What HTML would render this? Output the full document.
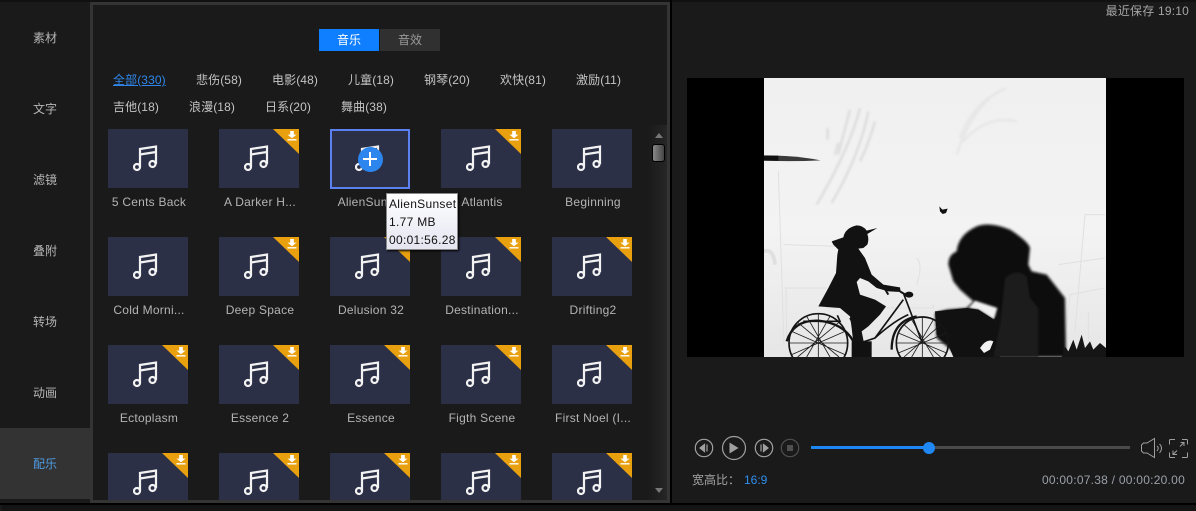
<!DOCTYPE html>
<html><head><meta charset="utf-8"><style>
*{margin:0;padding:0;box-sizing:border-box}
html,body{width:1196px;height:511px;overflow:hidden;background:#000;font-family:"Liberation Sans","Noto Sans CJK SC",sans-serif}
.a{position:absolute;white-space:nowrap}
#root{position:relative;width:1196px;height:511px;background:#1a1a1a;overflow:hidden}
.side{left:0;width:90px;text-align:center;font-size:12px;color:#b5b5b5;height:20px;line-height:20px}
.cat{font-size:12px;color:#c4c4c4;height:16px;line-height:16px;letter-spacing:.1px}
.th{width:80px;height:59px;background:#2b3047;overflow:hidden}
.th svg.n{position:absolute;left:25px;top:15px}
.cn{position:absolute;right:0;top:0;width:0;height:0;border-top:25px solid #e8a00e;border-left:26px solid transparent}
.dl{position:absolute;right:2px;top:2px;width:10px;height:10px}
.lb{width:112px;text-align:center;font-size:12px;color:#b4b4b4;letter-spacing:.25px;height:16px;line-height:16px}
</style></head><body><div id="root">
<!-- frame -->
<div class="a" style="left:0;top:0;width:1196px;height:2px;background:#111"></div>
<div class="a" style="left:90px;top:2px;width:580px;height:501px;background:#343434"></div>
<div class="a" style="left:93px;top:5px;width:574px;height:495px;background:#1a1a1a"></div>
<div class="a" style="left:670px;top:0;width:2px;height:503px;background:#000"></div>
<div class="a" style="left:0;top:503px;width:1196px;height:2px;background:#000"></div>
<div class="a" style="left:2px;top:505px;width:1194px;height:6px;background:#141414"></div>
<!-- sidebar -->
<div class="a" style="left:0;top:428px;width:90px;height:71px;background:#333"></div>
<div class="a side" style="top:28px">素材</div>
<div class="a side" style="top:99px">文字</div>
<div class="a side" style="top:170px">滤镜</div>
<div class="a side" style="top:241px">叠附</div>
<div class="a side" style="top:312px">转场</div>
<div class="a side" style="top:383px">动画</div>
<div class="a side" style="top:454px;color:#4f9be0">配乐</div>
<!-- tabs -->
<div class="a" style="left:319px;top:29px;width:60px;height:22px;background:#0f7fff;color:#fff;font-size:12px;line-height:22px;text-align:center">音乐</div>
<div class="a" style="left:380px;top:29px;width:60px;height:22px;background:#303030;color:#999;font-size:12px;line-height:22px;text-align:center">音效</div>
<!-- categories -->
<div class="a cat" style="left:113px;top:72px;color:#2f86ea;text-decoration:underline">全部(330)</div>
<div class="a cat" style="left:196px;top:72px">悲伤(58)</div>
<div class="a cat" style="left:272px;top:72px">电影(48)</div>
<div class="a cat" style="left:348px;top:72px">儿童(18)</div>
<div class="a cat" style="left:424px;top:72px">钢琴(20)</div>
<div class="a cat" style="left:500px;top:72px">欢快(81)</div>
<div class="a cat" style="left:576px;top:72px">激励(11)</div>
<div class="a cat" style="left:113px;top:99px">吉他(18)</div>
<div class="a cat" style="left:189px;top:99px">浪漫(18)</div>
<div class="a cat" style="left:265px;top:99px">日系(20)</div>
<div class="a cat" style="left:341px;top:99px">舞曲(38)</div>
<svg width="0" height="0" style="position:absolute"><defs>
<g id="note" fill="none" stroke="#f2f2f2" stroke-width="2.200"><circle cx="4" cy="23" r="3"/><circle cx="19.500" cy="20" r="3"/><path d="M7 23V5L23 2.500V20M7 10.500L23 8"/></g>
<g id="arr" fill="#fff"><path d="M3 0h4v4h3L5 8 0 4h3zM0 9h10v1.500H0z"/></g>
</defs></svg>
<!-- grid -->
<div class="a th" style="left:108px;top:129px"><svg class="n" width="28" height="30"><use href="#note"/></svg></div>
<div class="a th" style="left:219px;top:129px"><svg class="n" width="28" height="30"><use href="#note"/></svg><div class="cn"></div><svg class="dl" viewBox="0 0 10 11"><use href="#arr"/></svg></div>
<div class="a th" style="left:330px;top:129px;border:2px solid #5b80f0;height:60px"><svg class="n" style="left:23px;top:13px" width="28" height="30"><use href="#note"/></svg><div class="a" style="left:25.500px;top:15.500px;width:25px;height:25px;border-radius:50%;background:#2c86ee"></div><div class="a" style="left:31px;top:26.500px;width:14px;height:2.500px;background:#fff"></div><div class="a" style="left:36.800px;top:21px;width:2.500px;height:14px;background:#fff"></div></div>
<div class="a th" style="left:441px;top:129px"><svg class="n" width="28" height="30"><use href="#note"/></svg><div class="cn"></div><svg class="dl" viewBox="0 0 10 11"><use href="#arr"/></svg></div>
<div class="a th" style="left:552px;top:129px"><svg class="n" width="28" height="30"><use href="#note"/></svg></div>
<div class="a lb" style="left:93px;top:194px">5 Cents Back</div>
<div class="a lb" style="left:204px;top:194px">A Darker H...</div>
<div class="a lb" style="left:315px;top:194px">AlienSunset</div>
<div class="a lb" style="left:426px;top:194px">Atlantis</div>
<div class="a lb" style="left:537px;top:194px">Beginning</div>

<div class="a th" style="left:108px;top:237px"><svg class="n" width="28" height="30"><use href="#note"/></svg></div>
<div class="a th" style="left:219px;top:237px"><svg class="n" width="28" height="30"><use href="#note"/></svg><div class="cn"></div><svg class="dl" viewBox="0 0 10 11"><use href="#arr"/></svg></div>
<div class="a th" style="left:330px;top:237px"><svg class="n" width="28" height="30"><use href="#note"/></svg><div class="cn"></div><svg class="dl" viewBox="0 0 10 11"><use href="#arr"/></svg></div>
<div class="a th" style="left:441px;top:237px"><svg class="n" width="28" height="30"><use href="#note"/></svg><div class="cn"></div><svg class="dl" viewBox="0 0 10 11"><use href="#arr"/></svg></div>
<div class="a th" style="left:552px;top:237px"><svg class="n" width="28" height="30"><use href="#note"/></svg><div class="cn"></div><svg class="dl" viewBox="0 0 10 11"><use href="#arr"/></svg></div>
<div class="a lb" style="left:93px;top:302px">Cold Morni...</div>
<div class="a lb" style="left:204px;top:302px">Deep Space</div>
<div class="a lb" style="left:315px;top:302px">Delusion 32</div>
<div class="a lb" style="left:426px;top:302px">Destination...</div>
<div class="a lb" style="left:537px;top:302px">Drifting2</div>

<div class="a th" style="left:108px;top:345px"><svg class="n" width="28" height="30"><use href="#note"/></svg><div class="cn"></div><svg class="dl" viewBox="0 0 10 11"><use href="#arr"/></svg></div>
<div class="a th" style="left:219px;top:345px"><svg class="n" width="28" height="30"><use href="#note"/></svg><div class="cn"></div><svg class="dl" viewBox="0 0 10 11"><use href="#arr"/></svg></div>
<div class="a th" style="left:330px;top:345px"><svg class="n" width="28" height="30"><use href="#note"/></svg><div class="cn"></div><svg class="dl" viewBox="0 0 10 11"><use href="#arr"/></svg></div>
<div class="a th" style="left:441px;top:345px"><svg class="n" width="28" height="30"><use href="#note"/></svg><div class="cn"></div><svg class="dl" viewBox="0 0 10 11"><use href="#arr"/></svg></div>
<div class="a th" style="left:552px;top:345px"><svg class="n" width="28" height="30"><use href="#note"/></svg><div class="cn"></div><svg class="dl" viewBox="0 0 10 11"><use href="#arr"/></svg></div>
<div class="a lb" style="left:93px;top:410px">Ectoplasm</div>
<div class="a lb" style="left:204px;top:410px">Essence 2</div>
<div class="a lb" style="left:315px;top:410px">Essence</div>
<div class="a lb" style="left:426px;top:410px">Figth Scene</div>
<div class="a lb" style="left:537px;top:410px">First Noel (I...</div>

<div class="a th" style="left:108px;top:453px;height:47px"><svg class="n" width="28" height="30"><use href="#note"/></svg><div class="cn"></div><svg class="dl" viewBox="0 0 10 11"><use href="#arr"/></svg></div>
<div class="a th" style="left:219px;top:453px;height:47px"><svg class="n" width="28" height="30"><use href="#note"/></svg><div class="cn"></div><svg class="dl" viewBox="0 0 10 11"><use href="#arr"/></svg></div>
<div class="a th" style="left:330px;top:453px;height:47px"><svg class="n" width="28" height="30"><use href="#note"/></svg><div class="cn"></div><svg class="dl" viewBox="0 0 10 11"><use href="#arr"/></svg></div>
<div class="a th" style="left:441px;top:453px;height:47px"><svg class="n" width="28" height="30"><use href="#note"/></svg><div class="cn"></div><svg class="dl" viewBox="0 0 10 11"><use href="#arr"/></svg></div>
<div class="a th" style="left:552px;top:453px;height:47px"><svg class="n" width="28" height="30"><use href="#note"/></svg><div class="cn"></div><svg class="dl" viewBox="0 0 10 11"><use href="#arr"/></svg></div>
<!-- tooltip -->
<div class="a" style="left:386px;top:193px;width:72px;height:57px;background:linear-gradient(#fff,#e4e5f0);border:1px solid #8a8a8a;box-shadow:1px 1px 2px #000;color:#111;font-size:12px;line-height:18px;padding:1px 0 0 2px;letter-spacing:.3px">AlienSunset<br>1.77 MB<br>00:01:56.28</div>
<!-- scrollbar -->
<div class="a" style="left:648px;top:125px;width:19px;height:375px;background:linear-gradient(90deg,#1a1a1a,#262626)"></div>
<div class="a" style="left:655px;top:133px;width:0;height:0;border-left:4px solid transparent;border-right:4px solid transparent;border-bottom:5px solid #777"></div>
<div class="a" style="left:652px;top:144px;width:13px;height:18px;border:1px solid #000;border-radius:3px;background:linear-gradient(90deg,#888,#444)"></div>
<div class="a" style="left:655px;top:488px;width:0;height:0;border-left:4px solid transparent;border-right:4px solid transparent;border-top:5px solid #777"></div>
<!-- preview -->
<div class="a" style="right:7px;top:3px;font-size:12px;color:#a5a5a5;line-height:16px;letter-spacing:.2px">最近保存 19:10</div>
<div class="a" style="left:687px;top:78px;width:497px;height:279px;background:#000"></div>
<svg class="a" style="left:764px;top:78px" width="342" height="279" viewBox="12 0 1026 837">
<defs><filter id="b" x="-10%" y="-10%" width="120%" height="120%"><feGaussianBlur stdDeviation="4"/></filter><filter id="s"><feGaussianBlur stdDeviation="3"/></filter>
<linearGradient id="bg" x1="0" y1="0" x2="0" y2="1"><stop offset="0" stop-color="#f0f0f0"/><stop offset=".55" stop-color="#f3f3f3"/><stop offset="1" stop-color="#e6e6e6"/></linearGradient></defs>
<rect x="12" width="1026" height="837" fill="url(#bg)"/>
<g fill="none" stroke="#dcdcdc" stroke-width="7" filter="url(#s)">
<path d="M300 90Q270 210 170 380M325 100Q300 230 215 375M270 95Q250 170 235 230M345 130Q325 200 300 250M235 195L225 230M203 150V185"/>
<path d="M740 30Q640 70 600 180M770 130Q680 110 610 190M690 60Q630 110 590 230" stroke="#e6e6e6"/>
</g>
<g fill="none" stroke="#e0e0e0" stroke-width="3">
<path d="M975 410H1035M975 410L945 760M895 560L1035 540M930 650L1035 630M930 650L915 790M985 700V790M55 280L72 800M70 500L240 505M75 630H200M78 630L80 790M195 690H520V680M470 540Q490 560 470 620"/>
<path d="M12 520Q40 510 45 560" stroke-width="12" stroke="#e0e0e0"/>
</g>
<path d="M12 232Q110 232 182 247Q100 251 12 248Z" fill="#3a3a3a"/>
<path d="M12 233H55V248H12Z" fill="#111"/>
<path d="M538 385L547 395L563 392L558 405L548 408L540 400Z" fill="#111"/>
<!-- shadow person -->
<g fill="#0b0b0b" filter="url(#b)">
<path d="M565 560Q565 530 590 520Q595 470 650 445Q690 430 750 455Q805 490 810 510L805 560L815 580L860 590L915 660L918 837H600L530 780L525 705L560 695L620 690L640 670L600 635L580 610Z"/>
</g>
<path d="M645 668L712 690L702 725L655 695L625 690Z" fill="#f1f1f1" filter="url(#s)"/>
<path d="M525 700L620 690L655 695L702 725L720 700V837H580L560 790L530 770Z" fill="#111"/>
<path d="M735 600Q770 570 800 595L810 660L835 690L835 837H700L720 740Z" fill="#1b1b1b" filter="url(#s)"/>
<path d="M660 810Q680 780 700 790L690 815L672 825Z" fill="#f2f2f2"/>
<path d="M905 837L915 805L925 820L940 785L950 815L965 770L975 810L990 790L1000 815L1020 795L1038 810V837Z" fill="#151515"/>
<!-- girl -->
<path d="M215 490L250 478Q255 450 290 442Q310 442 320 458L352 450L322 468Q328 485 322 500L310 510L295 512L315 540L335 590L370 620L420 628L422 642L385 640L350 630L325 610L300 600L290 612L300 650L345 665L378 685L360 710L325 745L305 760L312 795L280 795L275 750L270 715L240 690L175 685L205 630L228 585L232 530L235 515L220 500Z" fill="#121212"/>
<!-- bicycle -->
<g fill="none" stroke="#141414" stroke-width="5">
<circle cx="175" cy="795" r="88"/><circle cx="487" cy="795" r="78"/>
<path d="M80 790Q100 725 175 728Q250 735 280 790M395 815Q395 730 470 715" stroke-width="7"/>
<path d="M300 795L345 780L430 665M430 645L487 795M345 780Q400 730 445 710M270 720L305 790M130 730H240L232 712" stroke-width="5"/>
<path d="M370 625L385 650M420 640L445 655" stroke-width="6"/>
</g>
<g stroke="#1c1c1c" stroke-width="2.500">
<path d="M175 707V837M87 795H263M113 733L237 837M237 733L113 837M140 715L210 837M210 715L140 837M95 760L255 830M255 760L95 830"/>
<path d="M487 717V837M409 795H565M432 740L542 837M542 740L432 837M455 725L520 837M520 725L455 837M415 765L560 825M560 765L415 825"/>
</g>
<ellipse cx="447" cy="650" rx="13" ry="9" fill="#111"/>
<rect x="275" y="790" width="60" height="47" fill="#111"/>
</svg>
<!-- controls -->
<svg class="a" style="left:690px;top:432px" width="120" height="32" fill="none" stroke="#a0a0a0" stroke-width="1.200">
<circle cx="14" cy="16" r="8.700"/><path d="M14.500 12.500v7l-4.500-3.500z" fill="#a0a0a0"/><path d="M17 12.500v7"/>
<circle cx="44" cy="16" r="11.500"/><path d="M39.500 10.500v11l9-5.500z" fill="#a0a0a0" stroke="none"/>
<circle cx="74" cy="16" r="8.700"/><path d="M73.500 12.500v7l4.500-3.500z" fill="#a0a0a0"/><path d="M71 12.500v7"/>
<circle cx="100" cy="16" r="8.700" stroke="#505050"/><rect x="97" y="13" width="6" height="6" fill="#505050" stroke="none"/>
</svg>
<div class="a" style="left:811px;top:446px;width:319px;height:3px;background:#4a4a4a"></div>
<div class="a" style="left:811px;top:446px;width:118px;height:3px;background:#1c86f2"></div>
<div class="a" style="left:923px;top:442px;width:12px;height:12px;border-radius:50%;background:#2088f5"></div>
<svg class="a" style="left:1140px;top:437px" width="50" height="22" fill="none" stroke="#a0a0a0" stroke-width="1">
<path d="M2 7.500L3.500 6H7L14.500 1.500V20.500L7 16H3.500L1.500 14V8zM17 9q2.500 2 0 5M19.500 7q4 4 0 9"/>
<path d="M29.500 7.500V3.500Q29.500 2.500 30.500 2.500H35M42 2.500H46.500Q47.500 2.500 47.500 3.500V7.500M29.500 15.500V19.500Q29.500 20.500 30.500 20.500H35M47.500 15.500V19.500Q47.500 20.500 46.500 20.500H42M33 17.500L37 13.500M33 13.500V17.500H37M44 5.500L40 9.500M40.500 5.500H44V9"/>
</svg>
<div class="a" style="left:692px;top:472px;font-size:12px;line-height:16px;color:#a5a5a5">宽高比：<span style="color:#2f8fef;position:absolute;left:52px">16:9</span></div>
<div class="a" style="right:11px;top:472px;font-size:12px;line-height:16px;color:#9aa0a8;letter-spacing:.25px">00:00:07.38 / 00:00:20.00</div>
</div></body></html>
